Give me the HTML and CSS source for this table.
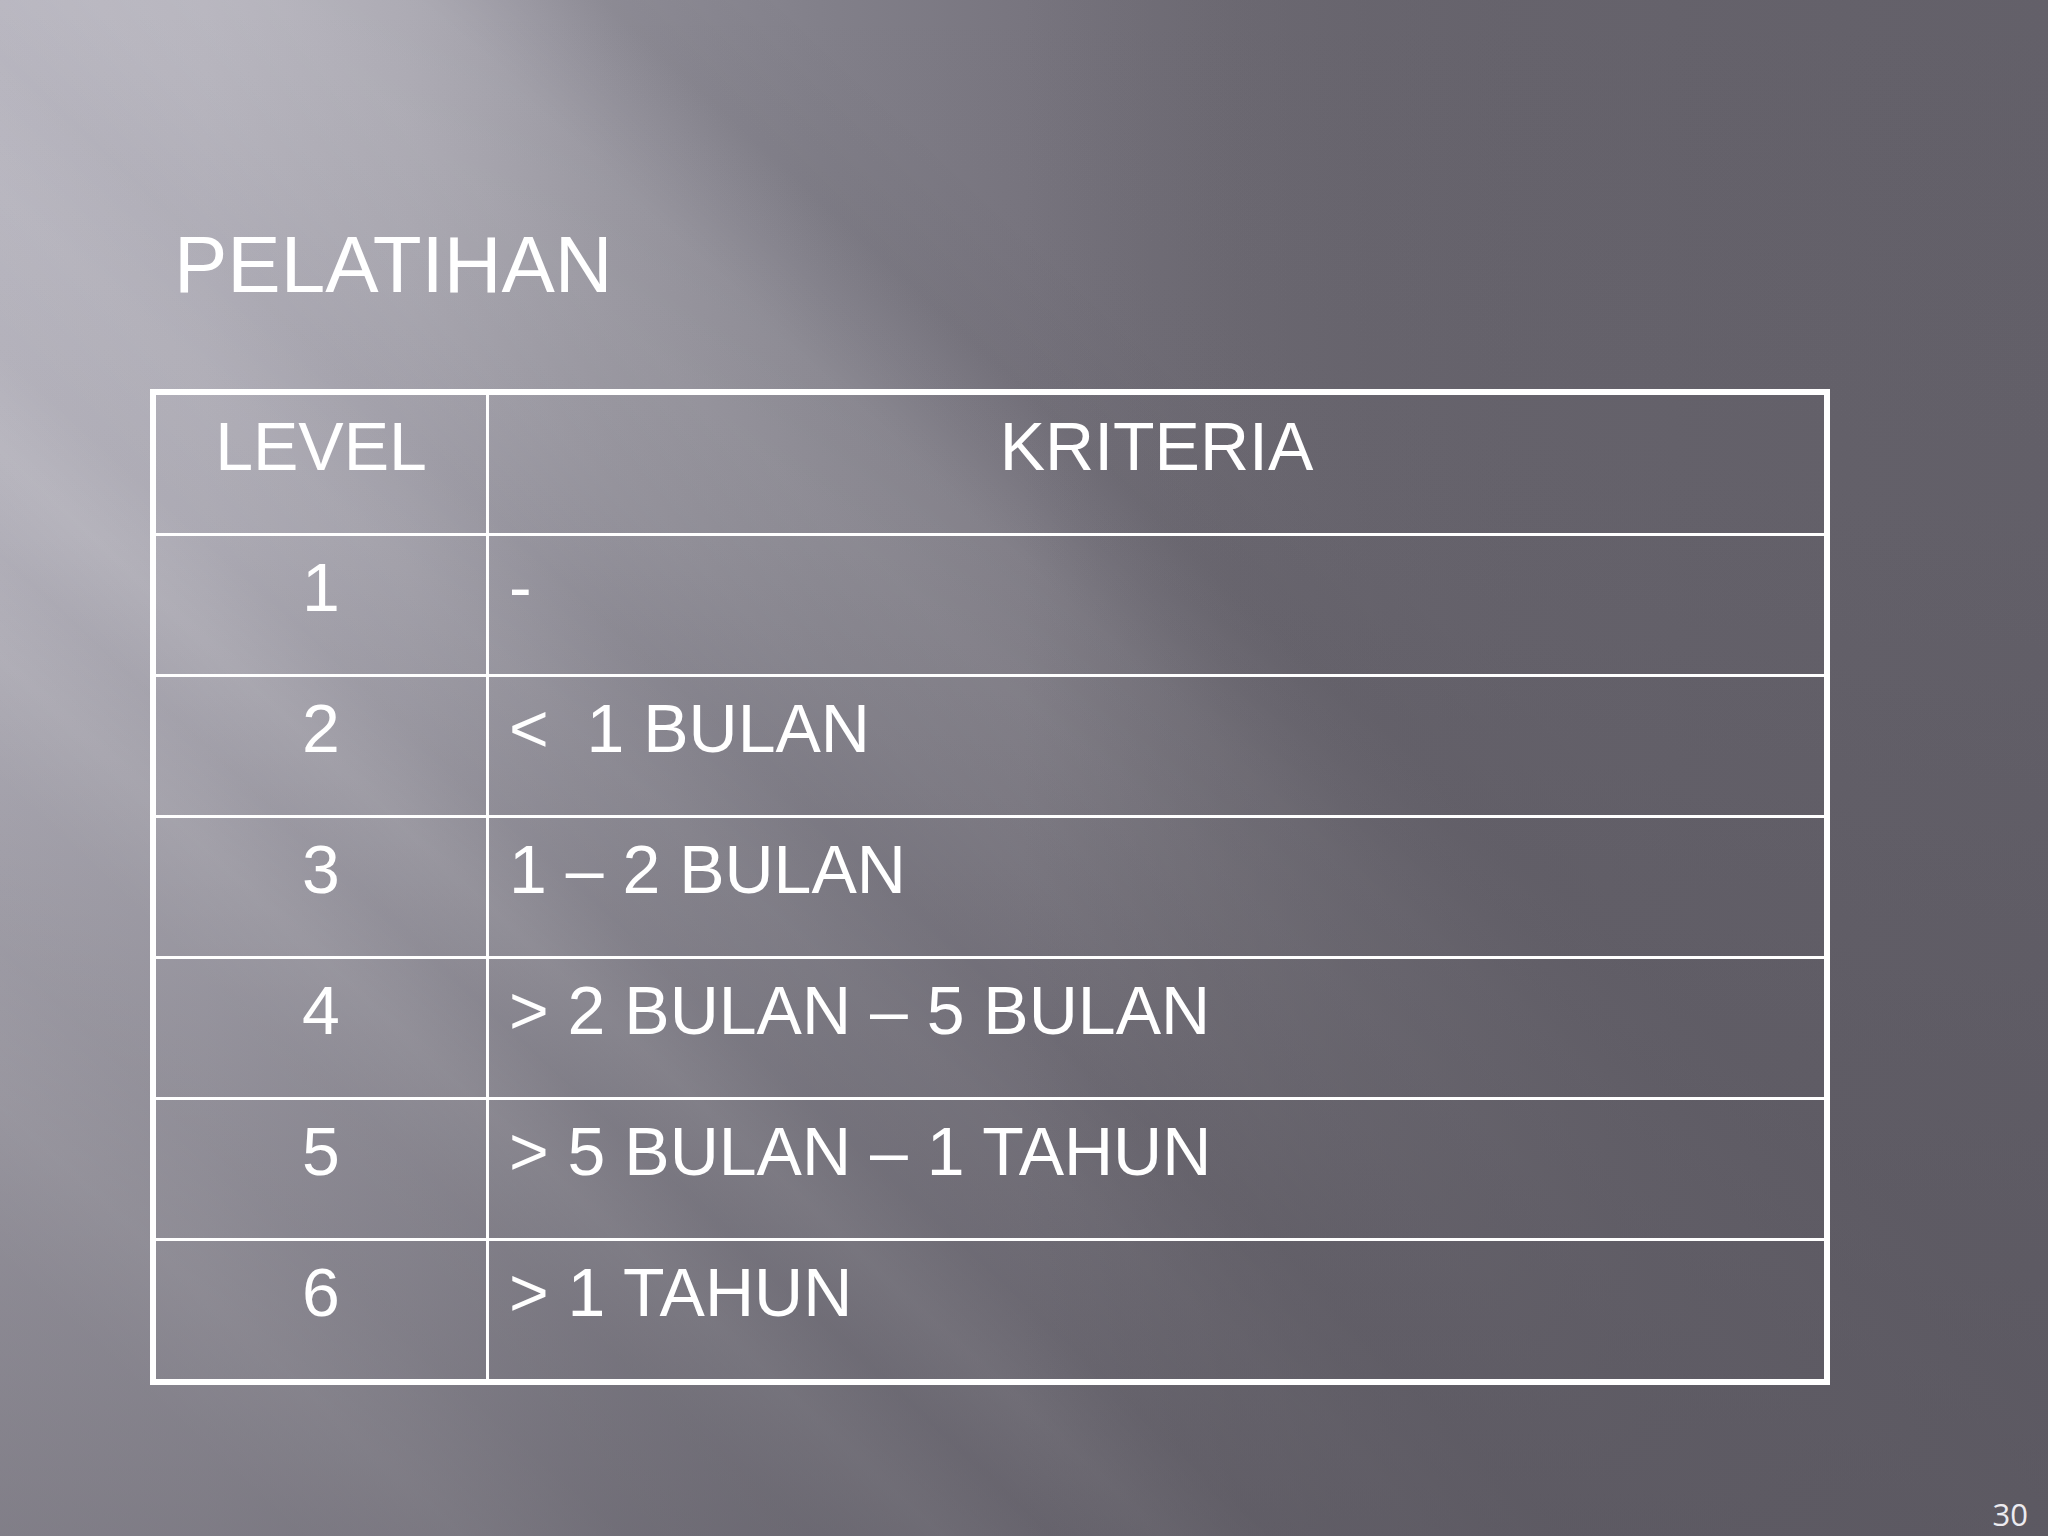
FILE: index.html
```html
<!DOCTYPE html>
<html lang="id">
<head>
<meta charset="utf-8">
<title>PELATIHAN</title>
<link rel="stylesheet" href="styles.css">
</head>
<body>
<main class="slide">
  <h1 class="title">PELATIHAN</h1>
  <div class="grid-table">
    <div class="cell level head">LEVEL</div>
    <div class="cell crit head">KRITERIA</div>
    <div class="cell level">1</div>
    <div class="cell crit">-</div>
    <div class="cell level">2</div>
    <div class="cell crit">&lt;&nbsp; 1 BULAN</div>
    <div class="cell level">3</div>
    <div class="cell crit">1 – 2 BULAN</div>
    <div class="cell level">4</div>
    <div class="cell crit">&gt; 2 BULAN – 5 BULAN</div>
    <div class="cell level">5</div>
    <div class="cell crit">&gt; 5 BULAN – 1 TAHUN</div>
    <div class="cell level">6</div>
    <div class="cell crit">&gt; 1 TAHUN</div>
  </div>
  <footer class="footer"><span class="page-num">30</span></footer>
</main>
</body>
</html>
```
FILE: styles.css
```css
html, body {
  margin: 0;
  padding: 0;
}
body {
  width: 2048px;
  height: 1536px;
  overflow: hidden;
  font-family: "Liberation Sans", Arial, sans-serif;
}
.slide {
  width: 2048px;
  height: 1536px;
  box-sizing: border-box;
  padding-top: 219px;
  display: flex;
  flex-direction: column;
  color: #ffffff;
  background:
    linear-gradient(to bottom, rgba(85,82,91,0) 0%, rgba(85,82,91,0.08) 35%, rgba(85,82,91,0.3) 65%, rgba(85,82,91,0.55) 100%),
    linear-gradient(to right, rgba(101,98,107,0) 50%, rgba(101,98,107,0.55) 66%, rgba(101,98,107,0.88) 80%, rgba(99,96,105,0.95) 100%),
    linear-gradient(43deg,
      rgba(255,255,255,0) 0%,
      rgba(255,255,255,0) 8%,
      rgba(255,255,255,0.1) 12.5%,
      rgba(255,255,255,0.02) 17%,
      rgba(255,255,255,0.03) 22%,
      rgba(255,255,255,0.12) 25.5%,
      rgba(255,255,255,0.03) 28.5%,
      rgba(255,255,255,0.13) 31.5%,
      rgba(255,255,255,0.04) 34.5%,
      rgba(255,255,255,0.08) 39%,
      rgba(255,255,255,0.03) 43%,
      rgba(255,255,255,0.09) 47%,
      rgba(255,255,255,0.13) 52%,
      rgba(255,255,255,0.1) 56%,
      rgba(255,255,255,0.03) 58.5%,
      rgba(0,0,0,0.03) 61%,
      rgba(0,0,0,0) 66%,
      rgba(0,0,0,0) 100%),
    linear-gradient(to right, #b6b4be 0%, #b0aeb8 10%, #a3a1ab 20%, #908e98 30%, #82808a 40%, #78757f 50%, #6f6c75 60%, #69666f 72%, #65626b 85%, #64616a 100%);
}
.title {
  margin: 0 0 78px 174px;
  font-size: 80px;
  font-weight: normal;
  line-height: 92px;
  letter-spacing: 0;
}
.grid-table {
  margin-left: 150px;
  width: 1680px;
  box-sizing: border-box;
  border: 6px solid #ffffff;
  display: grid;
  grid-template-columns: 333px 1335px;
}
.cell {
  box-sizing: border-box;
  height: 141px;
  border-bottom: 3px solid #ffffff;
  padding-top: 12px;
  font-size: 68px;
  line-height: 79px;
  white-space: nowrap;
}
.cell:nth-last-child(-n+2) {
  height: 138px;
  border-bottom: 0;
}
.level {
  border-right: 3px solid #ffffff;
  text-align: center;
}
.crit {
  padding-left: 20px;
}
.crit.head {
  padding-left: 0;
  text-align: center;
}
.footer {
  display: flex;
  justify-content: flex-end;
  margin-top: 108px;
  padding-right: 20px;
}
.page-num {
  font-family: "Open Sans", "DejaVu Sans", sans-serif;
  font-size: 31px;
  line-height: 42px;
  color: #ecebf0;
}
```
